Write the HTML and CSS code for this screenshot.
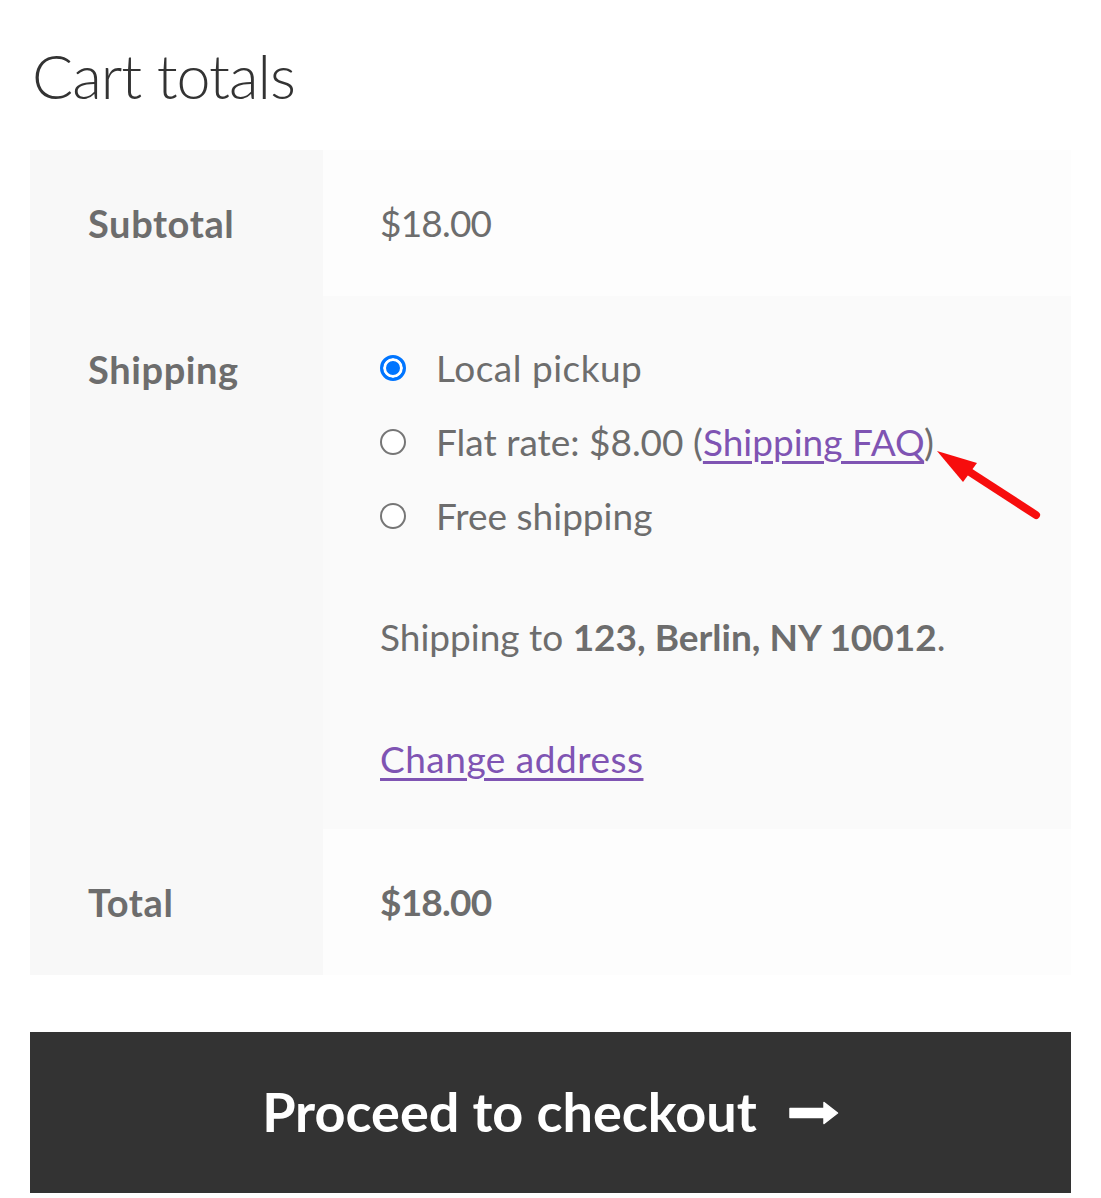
FILE: index.html
```html
<!DOCTYPE html>
<html lang="en">
<head>
<meta charset="utf-8">
<title>Cart totals</title>
<link rel="stylesheet" href="styles.css">
</head>
<body>
<div class="page">
  <h2 class="title">Cart totals</h2>
  <table class="totals">
    <tr class="row">
      <th>Subtotal</th>
      <td><span class="price">$18.00</span></td>
    </tr>
    <tr class="row row-shipping">
      <th>Shipping</th>
      <td>
        <ul class="methods">
          <li><span class="radio checked"></span><span class="wide">Local pickup</span></li>
          <li><span class="radio"></span><span>Flat rate: $8.00 (<a class="link" href="#">Shipping FAQ</a>)</span></li>
          <li><span class="radio"></span><span>Free shipping</span></li>
        </ul>
        <p class="dest">Shipping to <strong>123, Berlin, NY 10012</strong>.</p>
        <p class="change"><a class="link wide" href="#">Change address</a></p>
      </td>
    </tr>
    <tr class="row">
      <th>Total</th>
      <td><strong class="price">$18.00</strong></td>
    </tr>
  </table>
  <a class="checkout" href="#">Proceed to checkout
    <svg class="checkout-arrow" width="50" height="24" viewBox="0 0 50 24"><path d="M1 7.5h34V1.5l13.5 10.5-13.5 10.5v-6H1z" fill="#fff" stroke="#fff" stroke-width="1.5" stroke-linejoin="round"/></svg>
  </a>
  <svg class="annot" width="1101" height="1198" viewBox="0 0 1101 1198">
    <line x1="1036" y1="515" x2="962" y2="467" stroke="#f70d0d" stroke-width="8" stroke-linecap="round"/>
    <polygon points="937,451 977,463 963,482" fill="#f70d0d"/>
  </svg>
</div>
</body>
</html>
```
FILE: styles.css
```css
html, body {
  margin: 0;
  padding: 0;
  background: #ffffff;
}

.page {
  position: relative;
  display: flow-root;
  width: 1101px;
  height: 1198px;
  padding: 0 30px;
  box-sizing: border-box;
  font-family: "Lato", "Liberation Sans", sans-serif;
  color: #6d6d6d;
}

.title {
  margin: 38px 0 36px 2px;
  font-size: 61px;
  line-height: 76px;
  font-weight: 300;
  letter-spacing: -1px;
  color: #333333;
}

.totals {
  width: 1041px;
  border-collapse: collapse;
  border-spacing: 0;
  font-size: 37px;
  line-height: 66px;
}

.totals th,
.totals td {
  vertical-align: top;
  padding: 40px 57px 40px 57px;
  text-align: left;
}

.totals th {
  width: 178px;
  padding-left: 58px;
  background: #f8f8f8;
  font-weight: 700;
  font-size: 38px;
  letter-spacing: 0.6px;
}

.totals td {
  background: #fdfdfd;
  font-weight: 400;
}

.row-shipping td {
  background: #fafafa;
  padding-bottom: 37px;
}

.totals strong {
  font-weight: 700;
}

.price {
  letter-spacing: -0.8px;
}

.wide {
  letter-spacing: 0.5px;
}

.methods {
  list-style: none;
  margin: 0;
  padding: 0;
}

.methods li {
  display: flex;
  align-items: center;
  gap: 30px;
  line-height: 64px;
  margin-bottom: 10px;
}

.radio {
  flex: none;
  width: 26px;
  height: 26px;
  box-sizing: border-box;
  border-radius: 50%;
  border: 2px solid #767676;
  background: #ffffff;
}

.radio.checked {
  border: 3px solid #0075ff;
  background: #0075ff;
  box-shadow: inset 0 0 0 3px #ffffff;
}

.link {
  color: #7f54b3;
  text-decoration: underline;
  text-decoration-thickness: 3px;
  text-underline-offset: 5px;
}

.dest {
  margin: 56px 0 0;
}

.change {
  margin: 56px 0 0;
}

.checkout {
  display: flex;
  align-items: center;
  justify-content: center;
  gap: 32px;
  margin-top: 57px;
  height: 161px;
  background: #333333;
  color: #ffffff;
  text-decoration: none;
  font-size: 54px;
  font-weight: 700;
  padding-bottom: 2px;
  box-sizing: border-box;
}

.checkout-arrow {
  display: block;
  margin-top: 2px;
}

.annot {
  position: absolute;
  left: 0;
  top: 0;
  pointer-events: none;
}
```
